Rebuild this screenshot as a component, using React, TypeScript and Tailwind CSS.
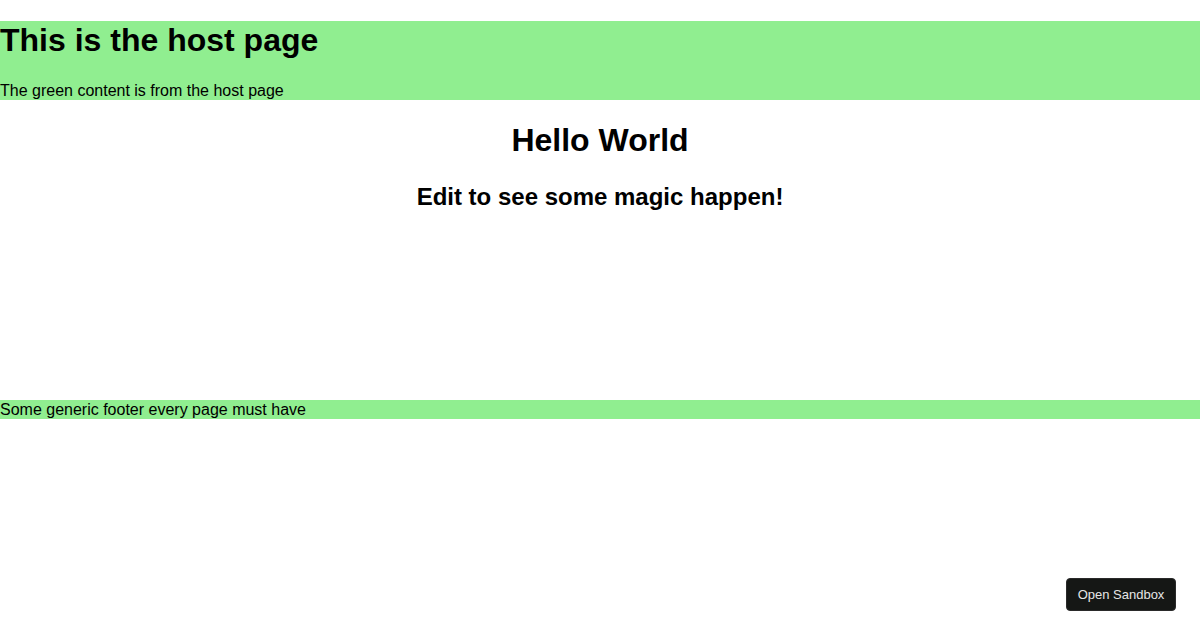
export default function App() {
  return (
    <div className="relative min-h-[630px] bg-white pt-[21px] font-['Liberation_Sans',Arial,sans-serif] text-black">
      <header className="bg-[#90ee90]">
        <h1 className="text-[32px] leading-[39px] font-bold">This is the host page</h1>
        <p className="mt-[21px] text-[16px] leading-[19px]">The green content is from the host page</p>
      </header>

      <main className="flex h-[300px] flex-col items-center pt-[22px] text-center">
        <h1 className="text-[32px] leading-[37px] font-bold">Hello World</h1>
        <h2 className="mt-[24px] text-[24px] leading-[28px] font-bold">Edit to see some magic happen!</h2>
      </main>

      <footer className="bg-[#90ee90] pt-px">
        <p className="text-[16px] leading-[18px]">Some generic footer every page must have</p>
      </footer>

      <button
        type="button"
        className="fixed right-[24px] bottom-[19px] h-[33px] w-[110px] rounded-[4px] border border-[#2a2a2a] bg-[#151715] text-[13px] text-[#e6e6e6]"
      >
        Open Sandbox
      </button>
    </div>
  );
}
